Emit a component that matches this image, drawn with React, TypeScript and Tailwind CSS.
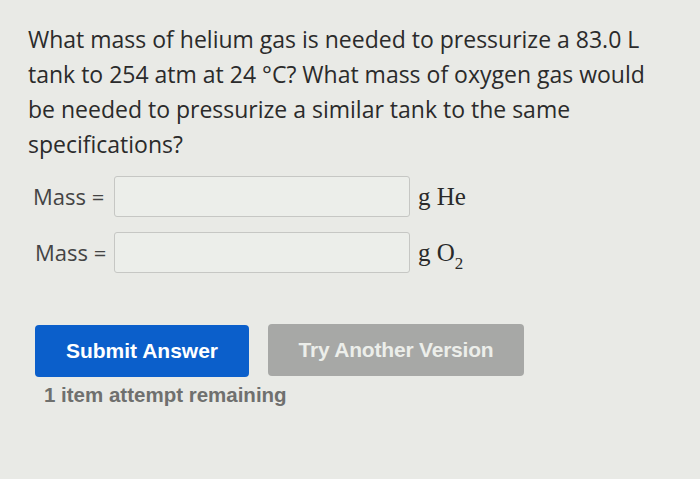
export default function App() {
  return (
    <div className="w-[700px] h-[479px] overflow-hidden bg-[#e9eae6] pt-[22px] text-[#2b2b2b]">
      <p
        className="pl-[28px] text-[23px] leading-[35px] whitespace-nowrap"
        style={{ fontFamily: '"Open Sans", sans-serif' }}
      >
        What mass of helium gas is needed to pressurize a 83.0 L
        <br />
        tank to 254 atm at 24 °C? What mass of oxygen gas would
        <br />
        be needed to pressurize a similar tank to the same
        <br />
        specifications?
      </p>

      <div className="mt-[14px] flex flex-col gap-[15px] pl-[33px]">
        <div className="flex items-center">
          <span className="w-[81px] text-[22px] text-[#444]" style={{ fontFamily: '"Open Sans", sans-serif' }}>
            Mass =
          </span>
          <input
            type="text"
            className="w-[296px] h-[41px] rounded-[3px] border border-[#c6c7c4] bg-[#eceeea] outline-none"
          />
          <span className="ml-[8px] text-[25px] text-[#2a2a2a]" style={{ fontFamily: '"Liberation Serif", serif' }}>
            g He
          </span>
        </div>
        <div className="flex items-center">
          <span className="w-[81px] pl-[2px] text-[22px] text-[#444]" style={{ fontFamily: '"Open Sans", sans-serif' }}>
            Mass =
          </span>
          <input
            type="text"
            className="w-[296px] h-[41px] rounded-[3px] border border-[#c6c7c4] bg-[#eceeea] outline-none"
          />
          <span className="ml-[8px] text-[25px] text-[#2a2a2a]" style={{ fontFamily: '"Liberation Serif", serif' }}>
            g O<sub className="text-[17px] align-[-4px]">2</sub>
          </span>
        </div>
      </div>

      <div
        className="mt-[52px] pl-[35px] flex items-start gap-[19px]"
        style={{ fontFamily: '"Liberation Sans", Arial, sans-serif' }}
      >
        <button
          type="button"
          className="w-[214px] h-[52px] rounded-[4px] bg-[#0b5fcb] text-white text-[21px] font-bold"
        >
          Submit Answer
        </button>
        <button
          type="button"
          className="-mt-px w-[256px] h-[52px] rounded-[4px] bg-[#a7a8a6] text-[#eceeea] text-[21px] font-bold tracking-[-0.2px]"
        >
          Try Another Version
        </button>
      </div>

      <p
        className="mt-[6px] pl-[44px] text-[20.5px] leading-[24px] font-bold text-[#6f706e]"
        style={{ fontFamily: '"Liberation Sans", Arial, sans-serif' }}
      >
        1 item attempt remaining
      </p>
    </div>
  );
}
